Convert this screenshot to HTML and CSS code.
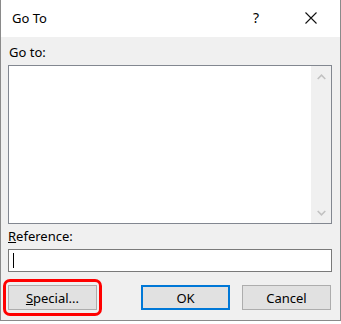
FILE: index.html
```html
<!DOCTYPE html>
<html lang="en">
<head>
    <meta charset="UTF-8">
    <meta name="viewport" content="width=device-width, initial-scale=1.0">
    <title>Go To</title>
    <link rel="stylesheet" href="styles.css">
</head>
<body>
    <div class="window">
        <header class="titlebar">
            <span class="title">Go To</span>
            <span class="help">?</span>
            <span class="close">
                <svg width="12" height="12" viewBox="0 0 12 12">
                    <path d="M0.5 0.5 L11.5 11.5 M11.5 0.5 L0.5 11.5" stroke="#111" stroke-width="1.1" fill="none"/>
                </svg>
            </span>
        </header>
        <div class="content">
            <div class="label">Go to:</div>
            <div class="listbox">
                <div class="list-area"></div>
                <div class="scrollbar">
                    <svg width="9" height="6" viewBox="0 0 9 6"><path d="M0.7 5 L4.5 1.2 L8.3 5" stroke="#c2c2c2" stroke-width="1.6" fill="none"/></svg>
                    <svg width="9" height="6" viewBox="0 0 9 6"><path d="M0.7 1 L4.5 4.8 L8.3 1" stroke="#c2c2c2" stroke-width="1.6" fill="none"/></svg>
                </div>
            </div>
            <div class="label label-ref"><u>R</u>eference:</div>
            <div class="input"><span class="caret"></span></div>
            <div class="buttons">
                <span class="highlight">
                    <button class="btn"><u>S</u>pecial...</button>
                </span>
                <button class="btn btn-default">OK</button>
                <button class="btn">Cancel</button>
            </div>
        </div>
    </div>
</body>
</html>
```

FILE: styles.css
```css
body {
    margin: 0;
    background-color: #fff;
    font-family: "Noto Sans", "DejaVu Sans", sans-serif;
    font-size: 13px;
    color: #000;
}
.window {
    width: 341px;
    height: 321px;
    box-sizing: border-box;
    border: 1px solid #8a8a8a;
    border-top: none;
    display: flex;
    flex-direction: column;
    background-color: #f0f0f0;
}
.titlebar {
    height: 37px;
    background-color: #fff;
    display: flex;
    align-items: center;
    padding-left: 11px;
}
.title {
    flex: 1;
    font-size: 13px;
    margin-top: -1px;
}
.help {
    font-size: 14px;
    width: 12px;
    margin-right: 40px;
    margin-top: -2px;
}
.close {
    display: flex;
    margin-right: 23px;
    margin-top: -1px;
}
.content {
    flex: 1;
    padding: 7px 9px 0 7px;
    display: flex;
    flex-direction: column;
}
.label {
    height: 16px;
    line-height: 16px;
    margin-bottom: 5px;
    padding-left: 1px;
}
.label-ref {
    margin-top: 4px;
    padding-left: 0;
}
.listbox {
    height: 159px;
    margin-right: -1px;
    box-sizing: border-box;
    border: 1px solid #828790;
    display: flex;
}
.list-area {
    flex: 1;
    background-color: #fff;
}
.scrollbar {
    width: 20px;
    background-color: #f0f0f0;
    display: flex;
    flex-direction: column;
    justify-content: space-between;
    align-items: center;
    padding: 8px 0 7px;
}
.input {
    height: 23px;
    margin-right: -1px;
    box-sizing: border-box;
    border: 1px solid #7a7a7a;
    background-color: #fff;
    display: flex;
    align-items: center;
    padding-left: 4px;
}
.caret {
    width: 1px;
    height: 15px;
    background-color: #000;
}
.buttons {
    display: flex;
    margin-top: 13px;
    gap: 12px;
}
.highlight {
    position: relative;
    display: flex;
    margin-right: auto;
}
.highlight::after {
    content: "";
    position: absolute;
    top: -6px;
    left: -5px;
    right: -5px;
    bottom: -6px;
    border: 3px solid #f00;
    border-radius: 7px;
}
.btn {
    width: 89px;
    height: 25px;
    margin: 0;
    padding: 0;
    border: 1px solid #adadad;
    background-color: #e1e1e1;
    font-family: inherit;
    font-size: 13px;
    color: #000;
}
.btn-default {
    border: 2px solid #0078d7;
}
```
